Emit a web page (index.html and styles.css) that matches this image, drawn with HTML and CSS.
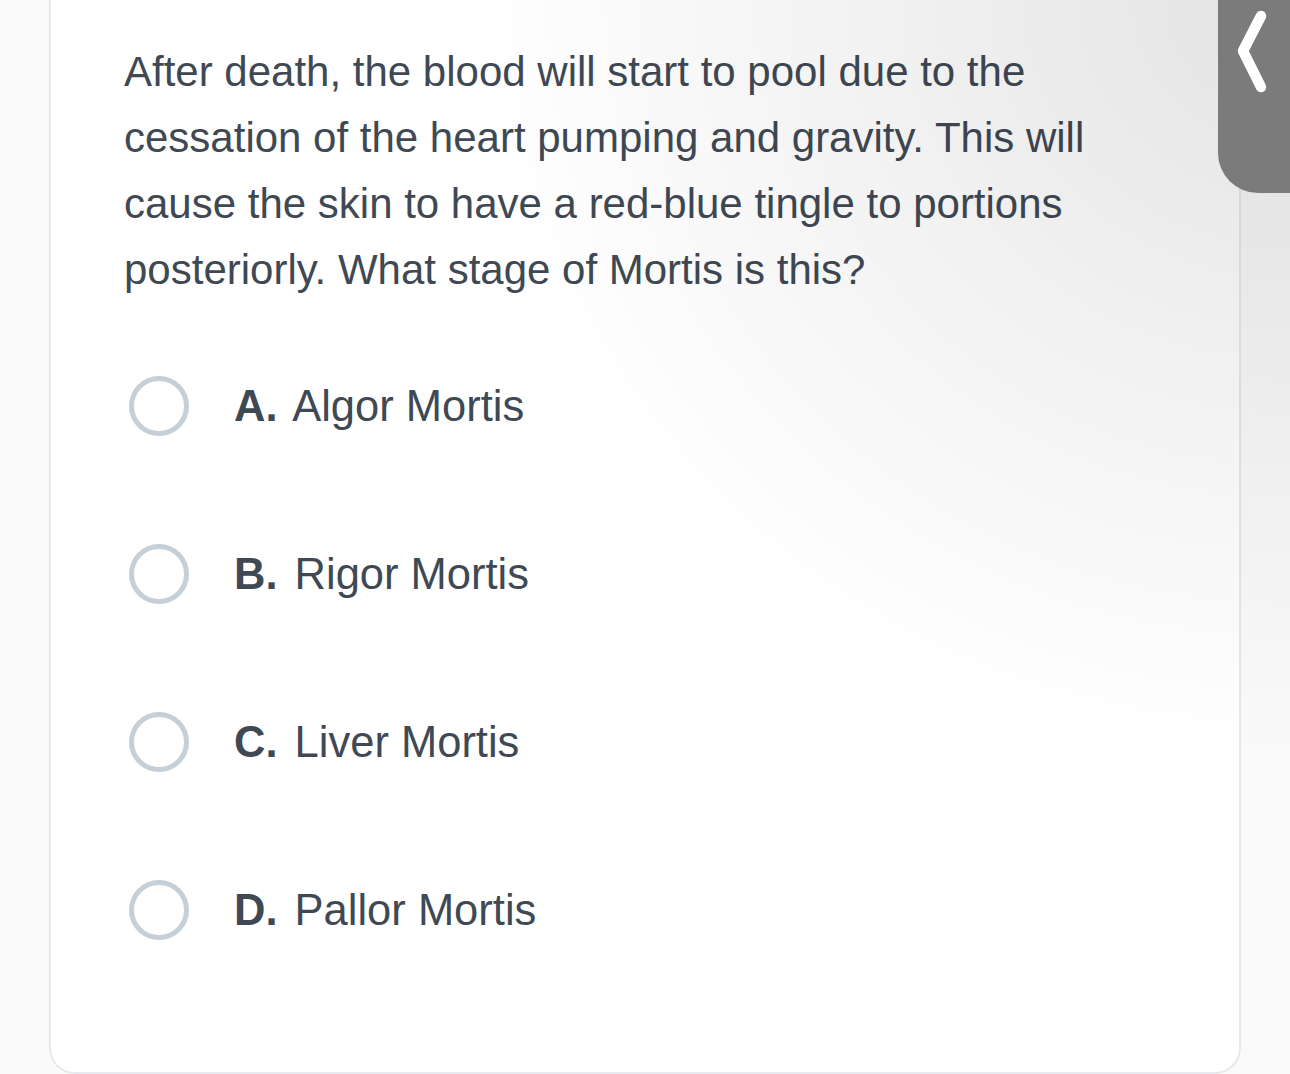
FILE: index.html
```html
<!DOCTYPE html>
<html lang="en">
<head>
  <meta charset="UTF-8" />
  <title>Question</title>
  <meta name="viewport" content="width=device-width, initial-scale=1.0">
  <link rel="stylesheet" href="styles.css">
</head>
<body>
  <div class="card">
    <p class="question">After death, the blood will start to pool due to the cessation of the heart pumping and gravity. This will cause the skin to have a red-blue tingle to portions posteriorly. What stage of Mortis is this?</p>
    <div class="options">
      <div class="option"><span class="radio"></span><span class="label"><b>A.</b> Algor Mortis</span></div>
      <div class="option"><span class="radio"></span><span class="label"><b>B.</b> Rigor Mortis</span></div>
      <div class="option"><span class="radio"></span><span class="label"><b>C.</b> Liver Mortis</span></div>
      <div class="option"><span class="radio"></span><span class="label"><b>D.</b> Pallor Mortis</span></div>
    </div>
  </div>
  <div class="shade"></div>
  <div class="side-tab">
    <svg width="72" height="193" viewBox="0 0 72 193">
      <polyline points="43,16 25,51 43,87" fill="none" stroke="#fff" stroke-width="10.5" stroke-linecap="round" stroke-linejoin="round"/>
    </svg>
  </div>
</body>
</html>
```

FILE: styles.css
```css
body {
  margin: 0;
  background: #fafafa;
  font-family: 'Liberation Sans', Arial, sans-serif;
  color: #3f4954;
  overflow: hidden;
}
.card {
  margin-left: 49px;
  width: 1188px;
  background: #fff;
  border: 2px solid #e6e9ed;
  border-top: none;
  border-radius: 0 0 26px 26px;
  padding: 39px 0 78px 0;
}
.question {
  margin: 0;
  padding: 0 150px 0 73px;
  font-size: 42px;
  line-height: 66px;
}
.options {
  margin-top: 19px;
  padding-left: 78px;
}
.option {
  display: flex;
  align-items: center;
  height: 168px;
}
.radio {
  width: 50px;
  height: 50px;
  border: 5px solid #c5cfd8;
  border-radius: 50%;
  flex-shrink: 0;
}
.label {
  margin-left: 45px;
  font-size: 43.5px;
}
.label b {
  margin-right: 5px;
}
.shade {
  position: fixed;
  inset: 0;
  pointer-events: none;
  background: radial-gradient(ellipse 820px 760px at 1290px 0, rgba(0, 0, 0, 0.11) 0%, rgba(0, 0, 0, 0.06) 45%, rgba(0, 0, 0, 0) 100%);
}
.side-tab {
  position: fixed;
  top: 0;
  right: 0;
  width: 72px;
  height: 193px;
  background: #7b7b7b;
  border-bottom-left-radius: 40px;
}
.side-tab svg {
  display: block;
}
```
